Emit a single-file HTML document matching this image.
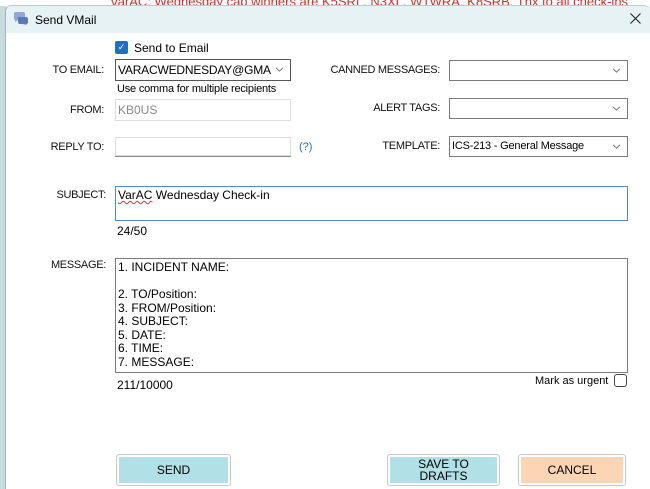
<!DOCTYPE html>
<html><head><style>
*{margin:0;padding:0;box-sizing:border-box}
body{width:650px;height:489px;overflow:hidden;background:#fff;font-family:"Liberation Sans",sans-serif;font-size:12px;color:#000;position:relative}
.a{position:absolute}
.lbl{position:absolute;text-align:right;font-size:11px;letter-spacing:-0.3px;color:#111}
.box{position:absolute;border:1px solid #7a7a7a;background:#fff;font-size:12px;padding:3px 2px;white-space:nowrap;overflow:hidden}
.chev{position:absolute;right:6px;top:7px;width:9px;height:5px}
.btn{position:absolute;border:1px solid #c8c8c8;border-radius:3px;display:flex;align-items:center;justify-content:center;text-align:center;font-size:12px;line-height:12px;box-shadow:inset 0 0 0 2px #fff}
</style></head><body>
<div class="a" style="left:110px;top:-6px;color:#c0392b;font-size:13px;white-space:nowrap">VarAC: Wednesday cap winners are K5SRL, N3XL, W1WRA, K8SRB. Tnx to all check-ins</div>
<div class="a" style="left:0;top:6px;width:6px;height:483px;background:#c6dcdf"></div>
<div class="a" style="left:5px;top:5px;width:645px;height:484px;background:#fff;border-left:1px solid #aac;border-top:1px solid #bcc;border-radius:6px 6px 0 0"></div>
<div class="a" style="left:6px;top:6px;width:644px;height:27px;background:#e7f2f4;border-radius:6px 6px 0 0"></div>
<svg class="a" style="left:13px;top:12px" width="16" height="13" viewBox="0 0 16 13"><path d="M1 2a2 2 0 0 1 2-2h7a2 2 0 0 1 2 2v4a2 2 0 0 1-2 2H5l-3 2V8a2 2 0 0 1-1-2z" fill="#8fa6d6"/><path d="M5 5h8a2 2 0 0 1 2 2v3a2 2 0 0 1-2 2l1 1-4-1H7a2 2 0 0 1-2-2z" fill="#5c78b8"/></svg>
<div class="a" style="left:35px;top:13px;font-size:12px">Send VMail</div>
<svg class="a" style="left:630px;top:13px" width="11" height="11" viewBox="0 0 11 11"><path d="M0.5 0.5l10 10M10.5 0.5l-10 10" stroke="#222" stroke-width="1.1"/></svg>

<div class="a" style="left:115px;top:41px;width:13px;height:13px;background:#1f6fc4;border-radius:2px;color:#fff;font-size:9px;line-height:13px;text-align:center">✓</div>
<div class="a" style="left:134px;top:41px">Send to Email</div>

<div class="lbl" style="left:20px;width:84px;top:64px">TO EMAIL:</div>
<div class="box" style="left:115px;top:59px;width:176px;height:22px;border-color:#555;padding-right:16px;letter-spacing:-0.2px">VARACWEDNESDAY@GMA<svg class="chev" viewBox="0 0 10 6"><path d="M1 1l4 4 4-4" stroke="#666" fill="none"/></svg></div>
<div class="a" style="left:117px;top:83px;font-size:11px;letter-spacing:-0.2px">Use comma for multiple recipients</div>

<div class="lbl" style="left:20px;width:84px;top:104px">FROM:</div>
<div class="box" style="left:115px;top:99px;width:176px;height:22px;border-color:#ddd;color:#8a8a8a">KB0US</div>

<div class="lbl" style="left:20px;width:84px;top:141px">REPLY TO:</div>
<div class="box" style="left:115px;top:137px;width:176px;height:20px;border:none;border-bottom:1px solid #888;box-shadow:inset 0 0 0 1px #ddd"></div>
<div class="a" style="left:299px;top:141px;color:#2a6fbf;font-size:11px">(?)</div>

<div class="lbl" style="left:300px;width:140px;top:64px">CANNED MESSAGES:</div>
<div class="box" style="left:449px;top:60px;width:179px;height:21px"><svg class="chev" viewBox="0 0 10 6"><path d="M1 1l4 4 4-4" stroke="#666" fill="none"/></svg></div>
<div class="lbl" style="left:300px;width:140px;top:102px">ALERT TAGS:</div>
<div class="box" style="left:449px;top:98px;width:179px;height:21px"><svg class="chev" viewBox="0 0 10 6"><path d="M1 1l4 4 4-4" stroke="#666" fill="none"/></svg></div>
<div class="lbl" style="left:300px;width:140px;top:140px">TEMPLATE:</div>
<div class="box" style="left:449px;top:136px;width:179px;height:21px;font-size:11px;letter-spacing:-0.2px">ICS-213 - General Message<svg class="chev" viewBox="0 0 10 6"><path d="M1 1l4 4 4-4" stroke="#666" fill="none"/></svg></div>

<div class="lbl" style="left:20px;width:86px;top:189px">SUBJECT:</div>
<div class="box" style="left:115px;top:186px;width:513px;height:35px;border-color:#5a86c8;padding:1px 2px"><span style="text-decoration:underline wavy #d33;text-decoration-thickness:1px">VarAC</span> Wednesday Check-in</div>
<div class="a" style="left:117px;top:224px">24/50</div>

<div class="lbl" style="left:20px;width:86px;top:259px">MESSAGE:</div>
<div class="box" style="left:115px;top:258px;width:513px;height:115px;line-height:13.5px;padding:2px 2px;font-size:12px;white-space:pre">1. INCIDENT NAME:

2. TO/Position:
3. FROM/Position:
4. SUBJECT:
5. DATE:
6. TIME:
7. MESSAGE:</div>
<div class="a" style="left:117px;top:378px">211/10000</div>
<div class="a" style="left:535px;top:375px;font-size:11px">Mark as urgent</div>
<div class="a" style="left:614px;top:374px;width:13px;height:13px;border:1px solid #444;border-radius:3px"></div>

<div class="btn" style="left:116px;top:454px;width:115px;height:32px;background:#b1e0e6">SEND</div>
<div class="btn" style="left:387px;top:454px;width:113px;height:32px;background:#b1e0e6">SAVE TO<br>DRAFTS</div>
<div class="btn" style="left:518px;top:454px;width:108px;height:32px;background:#fcd6b4">CANCEL</div>
</body></html>
